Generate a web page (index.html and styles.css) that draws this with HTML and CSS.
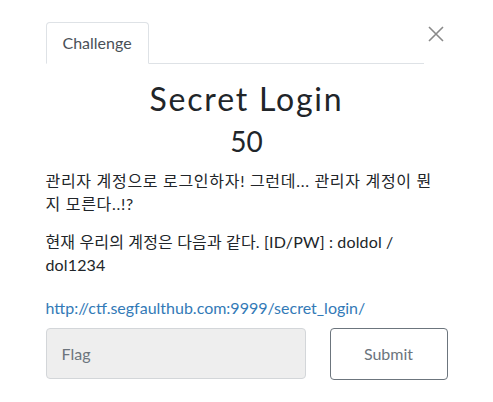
FILE: index.html
```html
<!DOCTYPE html>
<html lang="ko">
<head>
<meta charset="utf-8">
<title>Secret Login</title>
<link rel="stylesheet" href="styles.css">
</head>
<body>
<div class="modal">
  <div class="modal-header">
    <ul class="tabs">
      <li class="tab">Challenge</li>
    </ul>
    <button class="close" aria-label="Close">
      <svg width="16" height="16" viewBox="0 0 16 16"><path d="M1 1 L15 15 M15 1 L1 15" stroke="#8a8a8a" stroke-width="1.6" fill="none"/></svg>
    </button>
  </div>
  <h2 class="challenge-name">Secret Login</h2>
  <h3 class="challenge-value">50</h3>
  <div class="description">
    <p class="p1">관리자 계정으로 로그인하자! 그런데... 관리자 계정이 뭔지 모른다..!?</p>
    <p class="p2">현재 우리의 계정은 다음과 같다. [ID/PW] : doldol / dol1234</p>
    <p class="p3"><a href="#" class="link">http://ctf.segfaulthub.com:9999/secret_login/</a></p>
  </div>
  <form class="submit-row">
    <input class="flag-input" type="text" placeholder="Flag">
    <button type="button" class="submit-btn">Submit</button>
  </form>
</div>
</body>
</html>
```
FILE: styles.css
```css
html, body {
  margin: 0;
  padding: 0;
  background: #fff;
}
body {
  font-family: Lato, "Noto Sans CJK KR", sans-serif;
  font-size: 16px;
  color: #212529;
}
.modal {
  width: 402px;
  margin: 0 auto;
  padding-top: 22px;
}
.modal-header {
  display: flex;
  align-items: flex-start;
}
.tabs {
  flex: 1;
  display: flex;
  list-style: none;
  margin: 0;
  padding: 0;
  border-bottom: 1px solid #dee2e6;
}
.tab {
  margin-bottom: -1px;
  padding: 8px 16px;
  line-height: 24px;
  color: #495057;
  border: 1px solid #dee2e6;
  border-bottom-color: #fff;
  border-radius: 4px 4px 0 0;
  background: #fff;
}
.close {
  width: 24px;
  height: 24px;
  margin-top: 0;
  padding: 0;
  border: 0;
  background: transparent;
  display: flex;
  align-items: center;
  justify-content: center;
}
.challenge-name {
  margin: 16px 0 0;
  text-align: center;
  font-size: 32px;
  font-weight: 400;
  line-height: 1.2;
  letter-spacing: 1.8px;
}
.challenge-value {
  margin: 7px 0 0;
  text-align: center;
  font-size: 28px;
  font-weight: 400;
  line-height: 1.2;
}
.description {
  margin-top: 10px;
  padding-right: 8px;
  line-height: 23px;
}
.description p {
  margin: 0;
}
.p1 {
  letter-spacing: 0.7px;
}
.p2 {
  margin-top: 15px !important;
  letter-spacing: 0.15px;
}
.p3 {
  margin-top: 20px !important;
}
.link {
  color: #337ab7;
  text-decoration: none;
}
.submit-row {
  display: grid;
  grid-template-columns: 260px 118px;
  column-gap: 24px;
  margin-top: 9px;
}
.flag-input {
  box-sizing: border-box;
  height: 51px;
  padding: 0 15px;
  font-family: Lato, sans-serif;
  font-size: 16px;
  background: #eeeeee;
  border: 1px solid #d3d6d9;
  border-radius: 4px;
  outline: none;
}
.flag-input::placeholder {
  color: #6c757d;
}
.submit-btn {
  box-sizing: border-box;
  height: 52px;
  font-family: Lato, sans-serif;
  font-size: 16px;
  color: #6c757d;
  background: #fff;
  border: 1px solid #6c757d;
  border-radius: 4px;
}
```
